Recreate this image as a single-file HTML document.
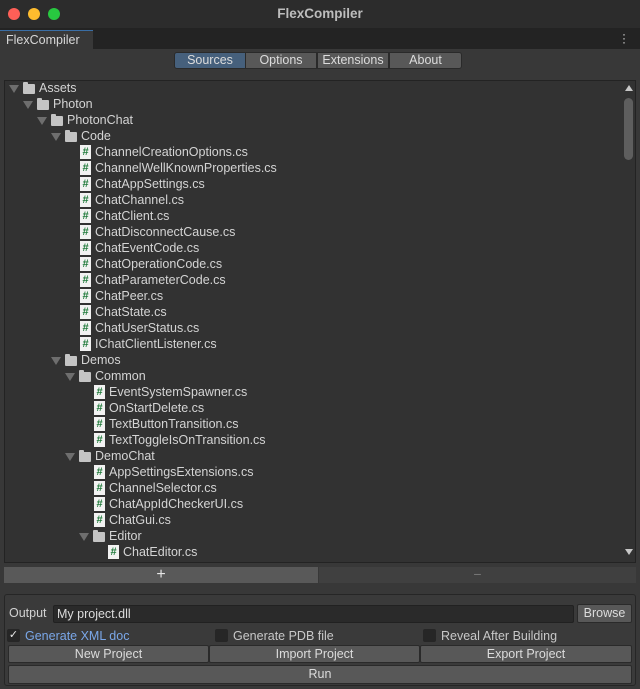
<!DOCTYPE html>
<html><head><meta charset="utf-8"><style>
*{box-sizing:border-box;margin:0;padding:0}
body{width:640px;height:689px;background:#383838;font-family:"Liberation Sans",sans-serif;color:#d2d2d2;position:relative;overflow:hidden;font-size:12.5px}
.abs{position:absolute}
.title{left:0;top:0;width:640px;height:28px;background:#2c2c2c;text-align:center;line-height:27px;font-weight:bold;font-size:13.5px;color:#bdbdbd}
.dot{top:8px;width:12px;height:12px;border-radius:50%}
.tabs{left:0;top:28px;width:640px;height:21px;background:#232323}
.tab{left:0;top:30px;width:93px;height:20px;background:#383838;border-top:1px solid #3a6ea5;line-height:19px;padding-left:6px;font-size:12.5px;color:#d8d8d8}
.seg{top:52px;height:17px;background:#585858;border:1px solid #2a2a2a;text-align:center;line-height:15px;color:#dcdcdc;font-size:12.5px}
.tree{left:4px;top:80px;width:632px;height:483px;background:#323232;border:1px solid #232323}
.row{position:absolute;height:16px;line-height:16px;white-space:nowrap;color:#d4d4d4}
.arr{position:absolute;width:0;height:0;border-left:5px solid transparent;border-right:5px solid transparent;border-top:8px solid #6e6e6e}
.fold{position:absolute;width:12px;height:10px;background:#c4c4c4;border-radius:1px}
.fold:before{content:"";position:absolute;left:0;top:-2px;width:5px;height:3px;background:#c4c4c4;border-radius:1px 1px 0 0}
.file{position:absolute;width:11px;height:14px;background:#f2f2f2;color:#1f7a3a;font-weight:bold;font-size:11px;line-height:14px;text-align:center}
.btn{background:#585858;border:1px solid #2a2a2a;border-radius:2px;text-align:center;color:#dcdcdc;font-size:12.5px}
</style></head><body>
<div class="abs title">FlexCompiler</div>
<div class="abs dot" style="left:8px;background:#fe5f57"></div>
<div class="abs dot" style="left:28px;background:#febc2e"></div>
<div class="abs dot" style="left:48px;background:#28c840"></div>
<div class="abs tabs"></div>
<div class="abs tab">FlexCompiler</div>
<div class="abs" style="left:622px;top:32px;width:3px;height:12px;color:#ddd;font-size:12px;line-height:4px">·<br>·<br>·</div>
<div class="abs seg" style="left:174px;width:72px;background:#46607c;border-radius:3px 0 0 3px">Sources</div>
<div class="abs seg" style="left:245px;width:72px">Options</div>
<div class="abs seg" style="left:317px;width:72px">Extensions</div>
<div class="abs seg" style="left:389px;width:73px;border-radius:0 3px 3px 0">About</div>
<div class="abs tree"></div>
<div class="abs" style="left:624px;top:98px;width:9px;height:62px;background:#5e5e5e;border-radius:5px"></div>
<div class="abs" style="left:625px;top:85px;border-left:4px solid transparent;border-right:4px solid transparent;border-bottom:6px solid #c8c8c8"></div>
<div class="abs" style="left:625px;top:549px;border-left:4px solid transparent;border-right:4px solid transparent;border-top:6px solid #c8c8c8"></div>
<div id="t">
<!-- rows -->
<div class="arr" style="left:9px;top:85px"></div><div class="fold" style="left:23px;top:84px"></div><div class="row" style="left:39px;top:80px">Assets</div>
<div class="arr" style="left:23px;top:101px"></div><div class="fold" style="left:37px;top:100px"></div><div class="row" style="left:53px;top:96px">Photon</div>
<div class="arr" style="left:37px;top:117px"></div><div class="fold" style="left:51px;top:116px"></div><div class="row" style="left:67px;top:112px">PhotonChat</div>
<div class="arr" style="left:51px;top:133px"></div><div class="fold" style="left:65px;top:132px"></div><div class="row" style="left:81px;top:128px">Code</div>
<div class="file" style="left:80px;top:145px">#</div><div class="row" style="left:95px;top:144px">ChannelCreationOptions.cs</div>
<div class="file" style="left:80px;top:161px">#</div><div class="row" style="left:95px;top:160px">ChannelWellKnownProperties.cs</div>
<div class="file" style="left:80px;top:177px">#</div><div class="row" style="left:95px;top:176px">ChatAppSettings.cs</div>
<div class="file" style="left:80px;top:193px">#</div><div class="row" style="left:95px;top:192px">ChatChannel.cs</div>
<div class="file" style="left:80px;top:209px">#</div><div class="row" style="left:95px;top:208px">ChatClient.cs</div>
<div class="file" style="left:80px;top:225px">#</div><div class="row" style="left:95px;top:224px">ChatDisconnectCause.cs</div>
<div class="file" style="left:80px;top:241px">#</div><div class="row" style="left:95px;top:240px">ChatEventCode.cs</div>
<div class="file" style="left:80px;top:257px">#</div><div class="row" style="left:95px;top:256px">ChatOperationCode.cs</div>
<div class="file" style="left:80px;top:273px">#</div><div class="row" style="left:95px;top:272px">ChatParameterCode.cs</div>
<div class="file" style="left:80px;top:289px">#</div><div class="row" style="left:95px;top:288px">ChatPeer.cs</div>
<div class="file" style="left:80px;top:305px">#</div><div class="row" style="left:95px;top:304px">ChatState.cs</div>
<div class="file" style="left:80px;top:321px">#</div><div class="row" style="left:95px;top:320px">ChatUserStatus.cs</div>
<div class="file" style="left:80px;top:337px">#</div><div class="row" style="left:95px;top:336px">IChatClientListener.cs</div>
<div class="arr" style="left:51px;top:357px"></div><div class="fold" style="left:65px;top:356px"></div><div class="row" style="left:81px;top:352px">Demos</div>
<div class="arr" style="left:65px;top:373px"></div><div class="fold" style="left:79px;top:372px"></div><div class="row" style="left:95px;top:368px">Common</div>
<div class="file" style="left:94px;top:385px">#</div><div class="row" style="left:109px;top:384px">EventSystemSpawner.cs</div>
<div class="file" style="left:94px;top:401px">#</div><div class="row" style="left:109px;top:400px">OnStartDelete.cs</div>
<div class="file" style="left:94px;top:417px">#</div><div class="row" style="left:109px;top:416px">TextButtonTransition.cs</div>
<div class="file" style="left:94px;top:433px">#</div><div class="row" style="left:109px;top:432px">TextToggleIsOnTransition.cs</div>
<div class="arr" style="left:65px;top:453px"></div><div class="fold" style="left:79px;top:452px"></div><div class="row" style="left:95px;top:448px">DemoChat</div>
<div class="file" style="left:94px;top:465px">#</div><div class="row" style="left:109px;top:464px">AppSettingsExtensions.cs</div>
<div class="file" style="left:94px;top:481px">#</div><div class="row" style="left:109px;top:480px">ChannelSelector.cs</div>
<div class="file" style="left:94px;top:497px">#</div><div class="row" style="left:109px;top:496px">ChatAppIdCheckerUI.cs</div>
<div class="file" style="left:94px;top:513px">#</div><div class="row" style="left:109px;top:512px">ChatGui.cs</div>
<div class="arr" style="left:79px;top:533px"></div><div class="fold" style="left:93px;top:532px"></div><div class="row" style="left:109px;top:528px">Editor</div>
<div class="file" style="left:108px;top:545px">#</div><div class="row" style="left:123px;top:544px">ChatEditor.cs</div>
</div>
<div class="abs" style="left:4px;top:567px;width:314px;height:16px;background:#595959;text-align:center;line-height:15px;font-size:16px;color:#e6e6e6">+</div>
<div class="abs" style="left:319px;top:567px;width:317px;height:16px;background:#404040;text-align:center;line-height:15px;font-size:14px;color:#777">−</div>
<div class="abs" style="left:4px;top:594px;width:632px;height:92px;background:#3a3a3a;border:1px solid #262626;border-radius:3px"></div>
<div class="abs" style="left:9px;top:606px;line-height:15px">Output</div>
<div class="abs" style="left:53px;top:605px;width:521px;height:18px;background:#2a2a2a;border:1px solid #212121;border-radius:2px;padding-left:3px;line-height:16px;color:#dcdcdc">My project.dll</div>
<div class="abs btn" style="left:577px;top:604px;width:55px;height:19px;line-height:17px">Browse</div>
<div class="abs" style="left:7px;top:629px;width:13px;height:13px;background:#262626;border-radius:2px;color:#e8e8e8;font-size:11px;line-height:13px;text-align:center">✓</div>
<div class="abs" style="left:25px;top:629px;line-height:14px;color:#7aa7e8">Generate XML doc</div>
<div class="abs" style="left:215px;top:629px;width:13px;height:13px;background:#262626;border-radius:2px"></div>
<div class="abs" style="left:233px;top:629px;line-height:14px;color:#c8c8c8">Generate PDB file</div>
<div class="abs" style="left:423px;top:629px;width:13px;height:13px;background:#262626;border-radius:2px"></div>
<div class="abs" style="left:441px;top:629px;line-height:14px;color:#c8c8c8">Reveal After Building</div>
<div class="abs btn" style="left:8px;top:645px;width:201px;height:18px;line-height:16px">New Project</div>
<div class="abs btn" style="left:209px;top:645px;width:211px;height:18px;line-height:16px">Import Project</div>
<div class="abs btn" style="left:420px;top:645px;width:212px;height:18px;line-height:16px">Export Project</div>
<div class="abs btn" style="left:8px;top:665px;width:624px;height:19px;line-height:17px">Run</div>
</body></html>
